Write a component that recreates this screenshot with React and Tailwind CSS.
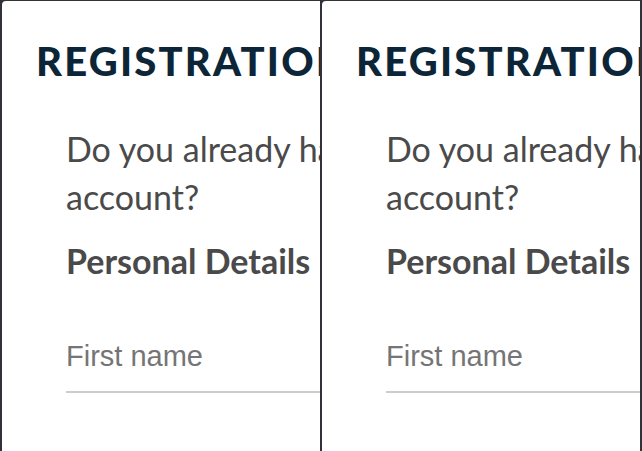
export default function App() {
  const Panel = () => (
    <div className="w-[318px] h-[450px] shrink-0 overflow-hidden bg-white rounded-tl-[4px]">
      <h1
        className="pl-[34px] pt-[38px] text-[40px] leading-[44px] font-black tracking-[2.2px] text-[#0c2537] whitespace-nowrap"
        style={{ fontFamily: 'Lato, "Noto Sans", sans-serif' }}
      >
        REGISTRATION
      </h1>
      <div className="pl-[64px] w-[440px]" style={{ fontFamily: 'Lato, "Noto Sans", sans-serif' }}>
        <p className="mt-[42px] text-[34px] leading-[48px] text-[#4a4a4a]">
          Do you already have an account?
        </p>
        <h2 className="mt-[20px] text-[34px] leading-[40px] font-bold text-[#4a4a4a] whitespace-nowrap">
          Personal Details
        </h2>
        <div className="mt-[59px] border-b-2 border-[#cccccc] pb-[19px]">
          <span
            className="block text-[29px] leading-[32px] text-[#757575]"
            style={{ fontFamily: '"Liberation Sans", Arial, sans-serif' }}
          >
            First name
          </span>
        </div>
      </div>
    </div>
  );

  return (
    <div className="w-[642px] h-[451px] bg-[#30323a] flex gap-[2px] pl-[2px] pt-[1px] overflow-hidden">
      <Panel />
      <Panel />
    </div>
  );
}
